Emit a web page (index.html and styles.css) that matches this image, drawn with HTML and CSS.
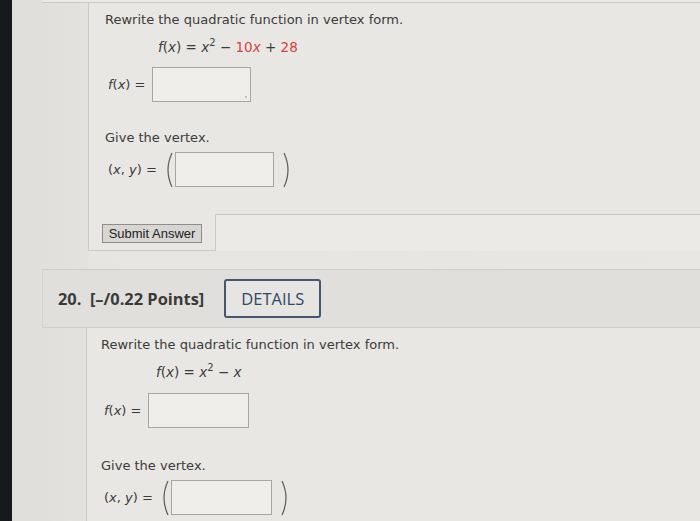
FILE: index.html
```html
<!DOCTYPE html>
<html lang="en">
<head>
    <meta charset="UTF-8">
    <meta name="viewport" content="width=device-width, initial-scale=1.0">
    <title>Question 19 / 20</title>
    <link rel="stylesheet" href="styles.css">
</head>
<body>
    <div class="screen">
        <div class="bezel"></div>
        <div class="page">
            <div class="prev-edge"></div>

            <div class="question q19">
                <div class="q-body">
                    <p class="prompt">Rewrite the quadratic function in vertex form.</p>
                    <p class="formula"><i>f</i>(<i>x</i>) = <i>x</i><sup>2</sup> &minus; <span class="red">10<i>x</i></span> + <span class="red">28</span></p>
                    <div class="answer-row">
                        <span class="lbl"><i>f</i>(<i>x</i>) =</span>
                        <span class="box"><span class="grip"></span></span>
                    </div>
                    <p class="prompt give">Give the vertex.</p>
                    <div class="answer-row vertex">
                        <span class="lbl wide">(<i>x</i>, <i>y</i>) =</span>
                        <svg class="paren" width="12" height="36" viewBox="0 0 12 36"><path d="M10 1 Q2 18 10 35" fill="none" stroke="#5a5a58" stroke-width="1.2"/></svg>
                        <span class="box"></span>
                        <svg class="paren" width="12" height="36" viewBox="0 0 12 36"><path d="M2 1 Q10 18 2 35" fill="none" stroke="#5a5a58" stroke-width="1.2"/></svg>
                    </div>
                </div>
                <div class="submit-row">
                    <div class="submit-cell"><button class="submit">Submit Answer</button></div>
                    <div class="feedback"></div>
                </div>
            </div>

            <div class="q-head">
                <span class="q-title">20.&nbsp; [&ndash;/0.22 Points]</span>
                <button class="details">DETAILS</button>
            </div>

            <div class="question q20">
                <div class="q-body">
                    <p class="prompt">Rewrite the quadratic function in vertex form.</p>
                    <p class="formula"><i>f</i>(<i>x</i>) = <i>x</i><sup>2</sup> &minus; <i>x</i></p>
                    <div class="answer-row">
                        <span class="lbl"><i>f</i>(<i>x</i>) =</span>
                        <span class="box"></span>
                    </div>
                    <p class="prompt give">Give the vertex.</p>
                    <div class="answer-row vertex">
                        <span class="lbl wide">(<i>x</i>, <i>y</i>) =</span>
                        <svg class="paren" width="12" height="36" viewBox="0 0 12 36"><path d="M10 1 Q2 18 10 35" fill="none" stroke="#5a5a58" stroke-width="1.2"/></svg>
                        <span class="box"></span>
                        <svg class="paren" width="12" height="36" viewBox="0 0 12 36"><path d="M2 1 Q10 18 2 35" fill="none" stroke="#5a5a58" stroke-width="1.2"/></svg>
                    </div>
                </div>
            </div>
        </div>
    </div>
</body>
</html>
```

FILE: styles.css
```css
body {
    margin: 0;
    font-family: "DejaVu Sans", Verdana, sans-serif;
    font-size: 13px;
    color: #3b3b3a;
}
.screen {
    display: flex;
    height: 521px;
    overflow: hidden;
}
.bezel {
    width: 12px;
    background: #17191d;
}
.page {
    flex: 1;
    background: linear-gradient(90deg, #dfdedb 0, #e3e2de 76px, #e6e5e1 77px, #e8e7e3 100%);
}
.prev-edge {
    margin-left: 31px;
    height: 2px;
    border-bottom: 1px solid #cbcac6;
    background: #ebeae7;
}

/* question cards */
.question {
    border-left: 1px solid #cbcac6;
    background: #e8e7e3;
}
.q19 {
    margin-left: 76px;
}
.q20 {
    margin-left: 74px;
    height: 300px;
}
.q19 .q-body {
    padding: 9px 0 0 16px;
}
.q20 .q-body {
    padding: 9px 0 0 14px;
}
p {
    margin: 0;
}
.prompt {
    line-height: 16px;
}
.formula {
    font-size: 13.5px;
    line-height: 16px;
    margin-top: 11px;
    margin-left: 53px;
}
.q20 .formula {
    margin-left: 55px;
}
.formula sup {
    font-size: 10px;
    line-height: 0;
    vertical-align: 6px;
}
.red {
    color: #d2443e;
}
.answer-row {
    display: flex;
    align-items: center;
    height: 35px;
    margin-top: 12px;
}
.q20 .answer-row {
    margin-top: 13px;
}
.lbl {
    width: 47px;
    padding-left: 3px;
    box-sizing: border-box;
    white-space: nowrap;
}
.lbl.wide {
    width: 55px;
}
.box {
    width: 99px;
    height: 35px;
    box-sizing: border-box;
    border: 1px solid #a7a6a2;
    background: #efeeea;
    position: relative;
}
.q20 .box {
    width: 101px;
}
.grip {
    position: absolute;
    right: 3px;
    bottom: 3px;
    width: 2px;
    height: 2px;
    background: #c4c3bf;
}
.give {
    margin-top: 28px;
}
.q20 .give {
    margin-top: 30px;
}
.answer-row.vertex {
    margin-top: 6px;
}
.paren {
    display: block;
    margin: 0 1px 0 2px;
}
.vertex .box {
    margin: 0 6px 0 0;
}

/* submit area */
.submit-row {
    display: flex;
    margin-top: 27px;
}
.submit-cell {
    width: 126px;
    box-sizing: border-box;
    padding: 10px 0 7px 13px;
    border-bottom: 1px solid #cbcac6;
}
.submit {
    display: block;
    width: 100px;
    height: 19px;
    padding: 0;
    font-family: "Liberation Sans", Arial, sans-serif;
    font-size: 13px;
    color: #222;
    background: #d7d6d3;
    border: 1px solid #8e8d8a;
    border-radius: 0;
}
.feedback {
    flex: 1;
    border-top: 1px solid #c6c5c1;
    border-left: 1px solid #cbcac6;
    background: #ebeae7;
}

/* question 20 header */
.q-head {
    margin-top: 18px;
    margin-left: 30px;
    height: 57px;
    display: flex;
    align-items: center;
    padding-left: 15px;
    background: #e0dfdb;
    border-top: 1px solid #cfceca;
    border-bottom: 1px solid #cfceca;
    border-left: 1px solid #d4d3cf;
    font-family: "Open Sans", sans-serif;
}
.q-title {
    font-size: 16.4px;
    font-weight: 700;
    color: #3a3a3a;
}
.details {
    margin-left: 20px;
    width: 97px;
    height: 39px;
    font-family: "Open Sans", sans-serif;
    font-size: 16.5px;
    color: #2f4868;
    background: #e6e5e1;
    border: 2px solid #45566f;
    border-radius: 3px;
}
```
